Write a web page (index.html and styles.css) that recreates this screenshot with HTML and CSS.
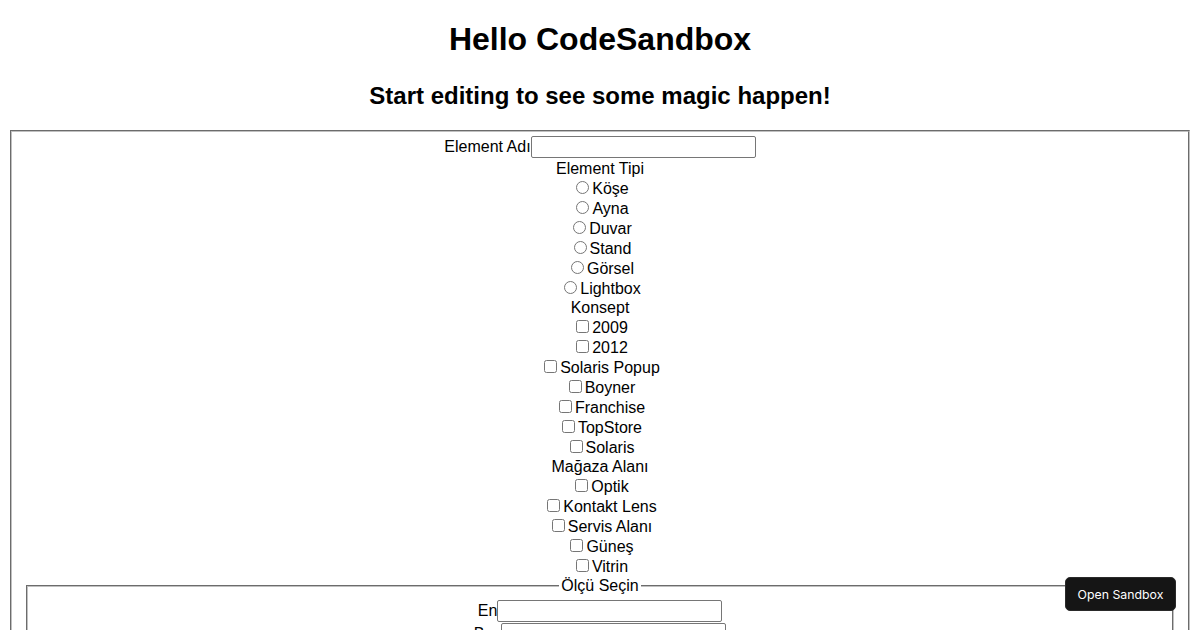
FILE: index.html
```html
<!DOCTYPE html>
<html lang="tr">
<head>
<meta charset="utf-8">
<title>CodeSandbox</title>
<link rel="stylesheet" href="styles.css">
</head>
<body>
<div class="app">
  <h1>Hello CodeSandbox</h1>
  <h2>Start editing to see some magic happen!</h2>
  <form>
    <fieldset class="outer">
      <div class="row field"><label>Element Adı</label><input class="text" type="text"></div>
      <div class="row">Element Tipi</div>
      <div class="row"><input type="radio" name="tip"><label>Köşe</label></div>
      <div class="row"><input type="radio" name="tip"><label>Ayna</label></div>
      <div class="row"><input type="radio" name="tip"><label>Duvar</label></div>
      <div class="row"><input type="radio" name="tip"><label>Stand</label></div>
      <div class="row"><input type="radio" name="tip"><label>Görsel</label></div>
      <div class="row"><input type="radio" name="tip"><label>Lightbox</label></div>
      <div class="row">Konsept</div>
      <div class="row"><input type="checkbox"><label>2009</label></div>
      <div class="row"><input type="checkbox"><label>2012</label></div>
      <div class="row"><input type="checkbox"><label>Solaris Popup</label></div>
      <div class="row"><input type="checkbox"><label>Boyner</label></div>
      <div class="row"><input type="checkbox"><label>Franchise</label></div>
      <div class="row"><input type="checkbox"><label>TopStore</label></div>
      <div class="row"><input type="checkbox"><label>Solaris</label></div>
      <div class="row">Mağaza Alanı</div>
      <div class="row"><input type="checkbox"><label>Optik</label></div>
      <div class="row"><input type="checkbox"><label>Kontakt Lens</label></div>
      <div class="row"><input type="checkbox"><label>Servis Alanı</label></div>
      <div class="row"><input type="checkbox"><label>Güneş</label></div>
      <div class="row"><input type="checkbox"><label>Vitrin</label></div>
      <fieldset class="inner">
        <legend>Ölçü Seçin</legend>
        <div class="row field"><label>En</label><input class="text" type="text"></div>
        <div class="row field"><label>Boy</label><input class="text" type="text"></div>
      </fieldset>
    </fieldset>
  </form>
</div>
<a class="open-sandbox" href="#">Open Sandbox</a>
</body>
</html>
```

FILE: styles.css
```css
body {
  margin: 0 8px 8px;
  background: #fff;
  color: #000;
}

.app {
  font-family: "Liberation Sans", Arial, sans-serif;
  text-align: center;
}

h1 {
  font-size: 32px;
  margin: 21.44px 0 23.44px;
}

h2 {
  font-size: 24px;
  margin: 19.92px 0;
}

fieldset {
  border: 2px groove #c0c0c0;
  margin: 0 2px;
  padding: 5.6px 12px 10px;
}

.outer {
  padding-top: 4.6px;
}

.inner {
  padding-top: 4.6px;
}

legend {
  padding: 0 2px;
  line-height: 19px;
}

.row {
  line-height: 19px;
}

.field {
  padding-bottom: 1px;
}

.text {
  width: 225px;
  height: 22px;
  box-sizing: border-box;
  font-family: "Liberation Sans", Arial, sans-serif;
  font-size: 13.33px;
  border: 1px solid #767676;
  border-radius: 2px;
  padding: 1px 2px;
  vertical-align: baseline;
}

.open-sandbox {
  position: fixed;
  right: 24px;
  bottom: 19px;
  width: 111px;
  height: 34px;
  box-sizing: border-box;
  display: flex;
  align-items: center;
  justify-content: center;
  background: #151515;
  color: #fff;
  border: 1px solid #2a2a2a;
  border-radius: 5px;
  font-family: Inter, "Liberation Sans", sans-serif;
  font-size: 12.3px;
  text-decoration: none;
}
```
